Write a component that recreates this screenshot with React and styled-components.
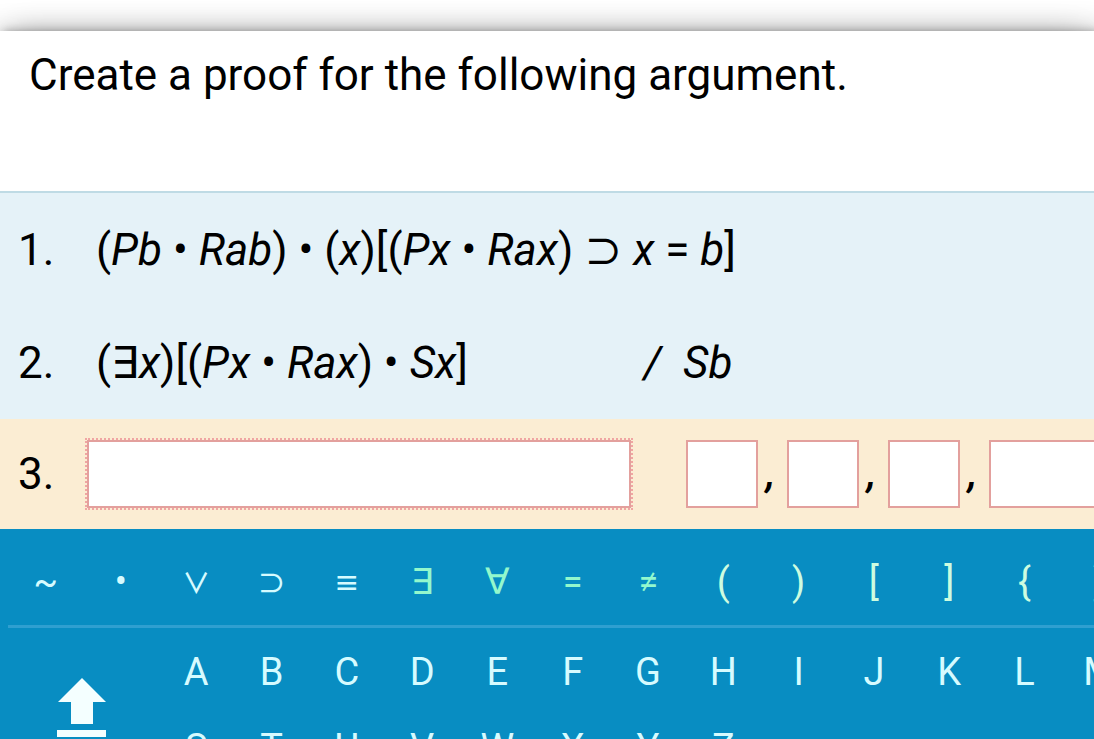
import React from "react";
import styled, { createGlobalStyle } from "styled-components";

const Global = createGlobalStyle`
  * { box-sizing: border-box; }
  body {
    margin: 0;
    overflow: hidden;
    background: #fff;
    color: #000;
    font-family: Roboto, "Liberation Sans", sans-serif;
    font-size: 44px;
  }
`;

const Page = styled.main`
  height: 100vh;
  padding-top: 31px;
  overflow: hidden;
`;

const Card = styled.section`
  background: #fff;
  box-shadow: 4px 0 8px rgba(0, 0, 0, 0.28), -14px 0 28px -1px rgba(0, 0, 0, 0.18), 14px 0 28px rgba(0, 0, 0, 0.24);
`;

const Prompt = styled.h1`
  margin: 0;
  height: 160px;
  padding: 16px 29px;
  font-size: 44px;
  line-height: 56px;
  font-weight: 400;
`;

const Premises = styled.ol`
  margin: 0;
  padding: 0;
  list-style: none;
  background: #e5f2f8;
  border-top: 2px solid #bfdbe5;
`;

const Line = styled.li`
  display: flex;
  align-items: center;
  height: 113px;
  padding-left: 18px;
`;

const Num = styled.span`
  flex: none;
  width: 78px;
`;

const Formula = styled.span`
  white-space: pre;
`;

const Conclusion = styled.span`
  margin-left: 176px;
  white-space: pre;
  font-style: italic;
`;

const Sym = styled.span`
  font-family: ${(p) => (p.$wide ? '"Noto Sans CJK JP"' : '"DejaVu Sans"')}, sans-serif;
  font-style: normal;
  font-size: ${(p) => p.$size}px;
  font-weight: ${(p) => (p.$wide ? 500 : 400)};
  line-height: 1;
`;

const Entry = styled.form`
  display: flex;
  align-items: center;
  height: 110px;
  padding-left: 18px;
  overflow: hidden;
  background: #fbedd3;
`;

const EntryNum = styled.label`
  flex: none;
  width: 69px;
`;

const Field = styled.input`
  flex: none;
  width: ${(p) => p.$width}px;
  height: 68px;
  padding: 0 8px;
  border: 2px solid #e3a09d;
  border-radius: 0;
  background: #fff;
  font: inherit;
  outline: ${(p) => (p.$active ? "2px dotted #f0a6a3" : "none")};
`;

const Citations = styled.div`
  display: flex;
  flex: none;
  align-items: center;
  margin-left: 55px;
`;

const Comma = styled.span`
  width: 29px;
  padding-left: 8px;
  font-size: 38px;
  font-style: italic;
  font-weight: 700;
`;

const Keyboard = styled.div`
  padding-left: 8px;
  overflow: hidden;
  background: #088dc2;
`;

const KeyRow = styled.div`
  display: grid;
  grid-template-columns: repeat(15, 1fr);
  width: 104%;
`;

const SymbolRow = styled(KeyRow)`
  height: 99px;
  align-items: center;
  padding-top: 10px;
  border-bottom: 3px solid #2f9fd0;
`;

const LetterRow = styled(KeyRow)`
  grid-auto-rows: 76px;
  align-items: center;
  padding-top: 6px;
`;

const Key = styled.button`
  display: flex;
  justify-content: center;
  align-items: center;
  height: 64px;
  padding: 0;
  border: 0;
  background: none;
  color: ${(p) => p.$color || "#d6fbff"};
  font-family: ${(p) => p.$font || "inherit"};
  font-size: ${(p) => p.$size || 38}px;
  font-weight: ${(p) => p.$weight || 400};
  line-height: 64px;
  grid-column-start: ${(p) => p.$col || "auto"};
`;

const ShiftKey = styled(Key)`
  grid-column: 1 / span 2;
  grid-row: 1 / span 2;
  height: 152px;
  padding: 0 2px 4px 0;
`;

const dejavu = '"DejaVu Sans", sans-serif';
const wide = '"Noto Sans CJK JP", sans-serif';
const green = "#93f8cd";
const pale = "#cdfce0";

const symbols = [
  { glyph: "~", name: "tilde", size: 36 },
  { glyph: "•", name: "and", size: 36 },
  { glyph: "∨", name: "or", size: 28, font: wide, weight: 500 },
  { glyph: "⊃", name: "horseshoe", size: 28, font: wide, weight: 500 },
  { glyph: "≡", name: "equivalent", size: 26, font: wide, weight: 700 },
  { glyph: "∃", name: "exists", size: 36, color: green, font: dejavu },
  { glyph: "∀", name: "for all", size: 36, color: green, font: dejavu },
  { glyph: "=", name: "equals", size: 36, color: green },
  { glyph: "≠", name: "not equal", size: 36, color: green },
  { glyph: "(", name: "left parenthesis", color: pale },
  { glyph: ")", name: "right parenthesis", color: pale },
  { glyph: "[", name: "left bracket", color: pale },
  { glyph: "]", name: "right bracket", color: pale },
  { glyph: "{", name: "left brace", color: pale },
  { glyph: "}", name: "right brace", color: pale },
];

export default function App() {
  return (
    <>
      <Global />
      <Page>
        <Card>
          <Prompt>Create a proof for the following argument.</Prompt>
          <Premises>
            <Line>
              <Num>1.</Num>
              <Formula>
                (<i>Pb</i> • <i>Rab</i>) • (<i>x</i>)[(<i>Px</i> • <i>Rax</i>) <Sym $wide $size={38}>⊃</Sym> <i>x</i> = <i>b</i>]
              </Formula>
            </Line>
            <Line>
              <Num>2.</Num>
              <Formula>
                (<Sym $size={44}>∃</Sym><i>x</i>)[(<i>Px</i> • <i>Rax</i>) • <i>Sx</i>]
              </Formula>
              <Conclusion>{"/  Sb"}</Conclusion>
            </Line>
          </Premises>
          <Entry>
            <EntryNum htmlFor="step">3.</EntryNum>
            <Field id="step" $width={544} $active />
            <Citations>
              <Field aria-label="First line" $width={72} />
              <Comma>,</Comma>
              <Field aria-label="Second line" $width={72} />
              <Comma>,</Comma>
              <Field aria-label="Third line" $width={72} />
              <Comma>,</Comma>
              <Field aria-label="Rule" $width={160} />
            </Citations>
          </Entry>
          <Keyboard>
            <SymbolRow>
              {symbols.map((s) => (
                <Key
                  key={s.name}
                  type="button"
                  aria-label={s.name}
                  $size={s.size}
                  $color={s.color}
                  $font={s.font}
                  $weight={s.weight}
                >
                  {s.glyph}
                </Key>
              ))}
            </SymbolRow>
            <LetterRow>
              <ShiftKey type="button" aria-label="Shift">
                <svg width="50" height="60" viewBox="0 0 50 60" fill="#f4ffff" aria-hidden="true">
                  <path d="M25 0 49 24H36V46H14V24H1ZM0 52H49V59H0Z" />
                </svg>
              </ShiftKey>
              {[..."ABCDEFGHIJKLM"].map((c) => (
                <Key key={c} type="button">{c}</Key>
              ))}
              {[..."STUVWXYZ"].map((c, i) => (
                <Key key={c} type="button" $col={i + 3}>{c}</Key>
              ))}
            </LetterRow>
          </Keyboard>
        </Card>
      </Page>
    </>
  );
}
